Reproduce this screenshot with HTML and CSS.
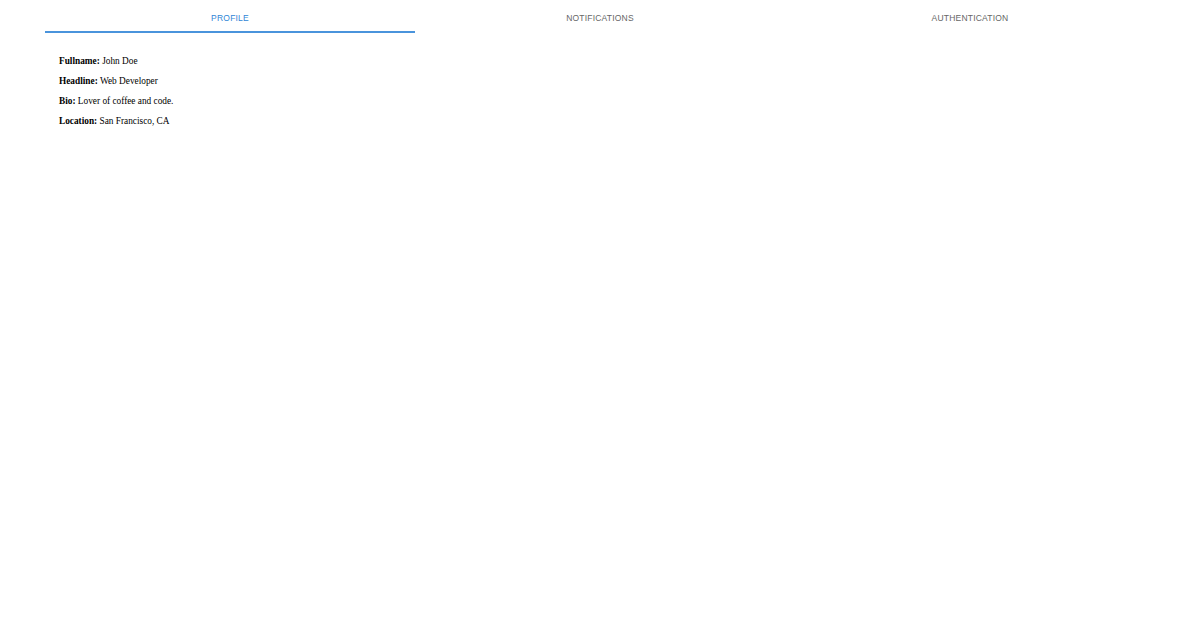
FILE: index.html
```html
<!DOCTYPE html>
<html lang="en">
<head>
  <meta charset="UTF-8">
  <title>Account Settings</title>
  <link rel="stylesheet" href="styles.css">
</head>
<body>
  <div class="settings">
    <div class="tabs">
      <div class="tab active">Profile</div>
      <div class="tab">Notifications</div>
      <div class="tab">Authentication</div>
    </div>
    <div class="tab-panel">
      <p><strong>Fullname:</strong> John Doe</p>
      <p><strong>Headline:</strong> Web Developer</p>
      <p><strong>Bio:</strong> Lover of coffee and code.</p>
      <p><strong>Location:</strong> San Francisco, CA</p>
    </div>
  </div>
</body>
</html>
```

FILE: styles.css
```css
body {
  margin: 0;
  background: white;
  font-family: "Liberation Serif", "Times New Roman", serif;
}
.settings {
  padding: 0 45px;
}
.tabs {
  display: flex;
}
.tab {
  flex: 1;
  height: 31px;
  line-height: 36px;
  text-align: center;
  font-family: "Liberation Sans", Arial, sans-serif;
  font-size: 8.5px;
  letter-spacing: 0.2px;
  text-transform: uppercase;
  color: #666;
  border-bottom: 2px solid transparent;
  cursor: pointer;
}
.tab.active {
  color: #2f86d6;
  border-bottom-color: #4a94dc;
}
.tab-panel {
  padding: 18px 14px;
}
.tab-panel p {
  margin: 0;
  font-size: 9.3px;
  line-height: 20px;
  color: #000;
}
```
